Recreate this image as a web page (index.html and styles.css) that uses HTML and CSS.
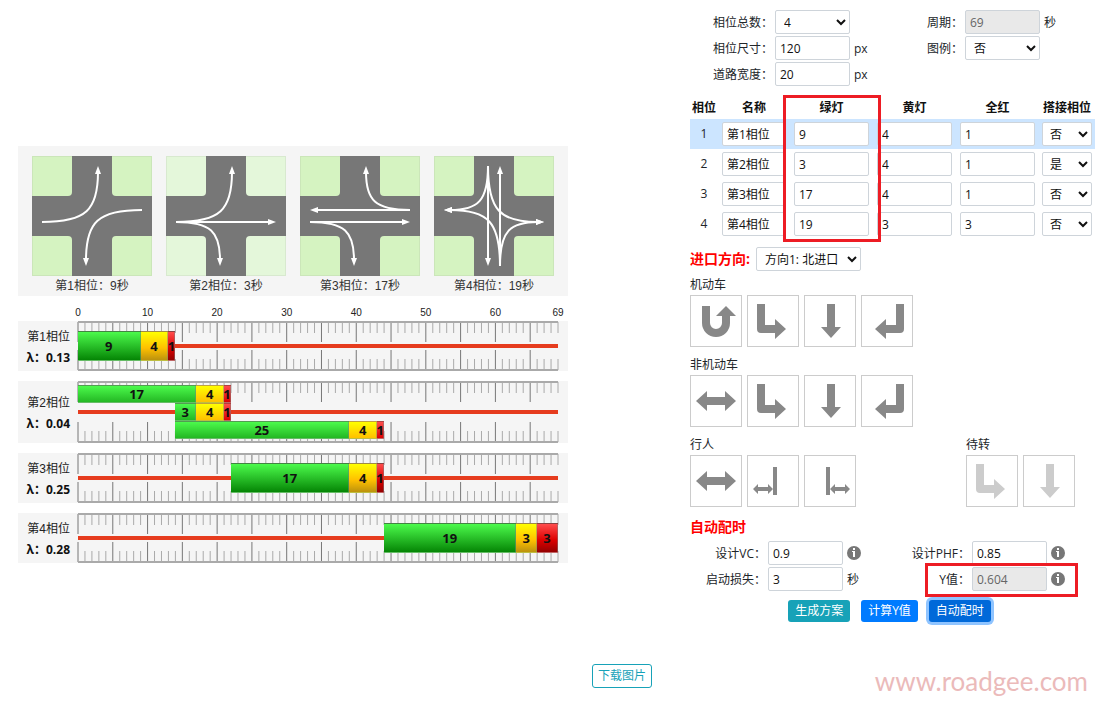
FILE: index.html
```html
<!DOCTYPE html>
<html lang="zh-CN">
<head>
<meta charset="utf-8">
<meta name="viewport" content="width=device-width, initial-scale=1">
<title>信号配时</title>
<link rel="stylesheet" href="styles.css">
</head>
<body>
<svg class="defs" width="0" height="0" aria-hidden="true">
  <defs>
    <symbol id="junction" viewBox="0 0 120 120">
      <rect width="120" height="120" fill="#777"/>
      <g class="corners">
        <path d="M0 0H40V36a4 4 0 0 1-4 4H0z"/>
        <path d="M120 0H80V36a4 4 0 0 0 4 4H120z"/>
        <path d="M0 120H40V84a4 4 0 0 0-4-4H0z"/>
        <path d="M120 120H80V84a4 4 0 0 1 4-4H120z"/>
      </g>
      <rect x=".5" y=".5" width="119" height="119" fill="none" stroke="#777" stroke-opacity=".1"/>
    </symbol>
    <g id="go-left"><path d="M10 66C54 66 66 54 66 16" fill="none" stroke="#fff" stroke-width="2"/><path d="M66 10l-3 8h6z" fill="#fff"/></g>
    <g id="go-through"><path d="M10 66H104" fill="none" stroke="#fff" stroke-width="2"/><path d="M110 66l-8-3v6z" fill="#fff"/></g>
    <g id="go-right"><path d="M10 66C45 66 54 76 54 104" fill="none" stroke="#fff" stroke-width="2"/><path d="M54 110l-3-8h6z" fill="#fff"/></g>
    <symbol id="i-uturn" viewBox="1 1 50 50"><path d="M16 11V28a10 10 0 0 0 20 0V20" fill="none" stroke="currentColor" stroke-width="8"/><path d="M36 11L46 21H26z" fill="currentColor"/></symbol>
    <symbol id="i-left" viewBox="1 1 50 50"><path d="M10 9h8v21h10v-6l11 10-11 10v-6H14a4 4 0 0 1-4-4z" fill="currentColor"/></symbol>
    <symbol id="i-down" viewBox="1 1 50 50"><path d="M23 9h8v23h6L27 43 17 32h6z" fill="currentColor"/></symbol>
    <symbol id="i-right" viewBox="1 1 50 50"><path d="M43 9h-8v21H25v-6L14 34l11 10v-6h14a4 4 0 0 0 4-4z" fill="currentColor"/></symbol>
    <symbol id="i-both" viewBox="1 1 50 50"><path d="M6 26L17 16v6h18v-6l11 10-11 10v-6H17v6z" fill="currentColor"/></symbol>
    <symbol id="i-half-a" viewBox="1 1 50 50"><path d="M26 12h4v28h-4zM6 34l5-5v3h10v-3l5 5-5 5v-3H11v3z" fill="currentColor"/></symbol>
    <symbol id="i-half-b" viewBox="1 1 50 50"><path d="M22 12h4v28h-4zM26 34l5-5v3h10v-3l5 5-5 5v-3H31v3z" fill="currentColor"/></symbol>
    <symbol id="i-info" viewBox="0 0 14 14"><circle cx="7" cy="7" r="7" fill="#777"/><path d="M6 2h2v2H6zM5 5h3v6H6V6H5z" fill="#fff"/></symbol>
  </defs>
</svg>

<main class="workspace">
  <section class="diagram" aria-label="相位图">
    <div class="phases">
      <figure class="phase">
        <svg viewBox="0 0 120 120"><use href="#junction"/><use href="#go-left"/><use href="#go-left" transform="rotate(180 60 60)"/></svg>
        <figcaption>第1相位：9秒</figcaption>
      </figure>
      <figure class="phase phase-overlap">
        <svg viewBox="0 0 120 120"><use href="#junction"/><use href="#go-left"/><use href="#go-through"/><use href="#go-right"/></svg>
        <figcaption>第2相位：3秒</figcaption>
      </figure>
      <figure class="phase">
        <svg viewBox="0 0 120 120"><use href="#junction"/><use href="#go-through"/><use href="#go-right"/><g transform="rotate(180 60 60)"><use href="#go-through"/><use href="#go-right"/></g></svg>
        <figcaption>第3相位：17秒</figcaption>
      </figure>
      <figure class="phase">
        <svg viewBox="0 0 120 120"><use href="#junction"/><g transform="rotate(90 60 60)"><use href="#go-left"/><use href="#go-through"/><use href="#go-right"/></g><g transform="rotate(270 60 60)"><use href="#go-left"/><use href="#go-through"/><use href="#go-right"/></g></svg>
        <figcaption>第4相位：19秒</figcaption>
      </figure>
    </div>

    <div class="axis"><svg id="axis" width="100%" height="25"></svg></div>

    <div class="rows">
      <div class="row">
        <div class="row-label"><span>第1相位</span><b>λ：0.13</b></div>
        <div class="track">
          <svg class="ruler" width="100%" height="50"></svg>
          <div class="lanes">
            <div class="lane tall" style="--start:0"><span class="bar green" style="--s:9">9</span><span class="bar yellow" style="--s:4">4</span><span class="bar red" style="--s:1">1</span></div>
          </div>
        </div>
      </div>
      <div class="row">
        <div class="row-label"><span>第2相位</span><b>λ：0.04</b></div>
        <div class="track">
          <svg class="ruler" width="100%" height="62"></svg>
          <div class="lanes">
            <div class="lane" style="--start:0"><span class="bar green" style="--s:17">17</span><span class="bar yellow" style="--s:4">4</span><span class="bar red" style="--s:1">1</span></div>
            <div class="lane" style="--start:14"><span class="bar green" style="--s:3">3</span><span class="bar yellow" style="--s:4">4</span><span class="bar red" style="--s:1">1</span></div>
            <div class="lane" style="--start:14"><span class="bar green" style="--s:25">25</span><span class="bar yellow" style="--s:4">4</span><span class="bar red" style="--s:1">1</span></div>
          </div>
        </div>
      </div>
      <div class="row">
        <div class="row-label"><span>第3相位</span><b>λ：0.25</b></div>
        <div class="track">
          <svg class="ruler" width="100%" height="50"></svg>
          <div class="lanes">
            <div class="lane tall" style="--start:22"><span class="bar green" style="--s:17">17</span><span class="bar yellow" style="--s:4">4</span><span class="bar red" style="--s:1">1</span></div>
          </div>
        </div>
      </div>
      <div class="row">
        <div class="row-label"><span>第4相位</span><b>λ：0.28</b></div>
        <div class="track">
          <svg class="ruler" width="100%" height="50"></svg>
          <div class="lanes">
            <div class="lane tall" style="--start:44"><span class="bar green" style="--s:19">19</span><span class="bar yellow" style="--s:3">3</span><span class="bar red" style="--s:3">3</span></div>
          </div>
        </div>
      </div>
    </div>
  </section>

  <form class="panel">
    <div class="fields fields-top">
      <div class="field"><label for="count">相位总数：</label><select id="count" class="ctl"><option>4</option></select></div>
      <div class="field"><label for="cycle">周期：</label><input id="cycle" class="ctl" value="69" disabled><span class="unit">秒</span></div>
      <div class="field"><label for="size">相位尺寸：</label><input id="size" class="ctl" value="120"><span class="unit">px</span></div>
      <div class="field"><label for="legend">图例：</label><select id="legend" class="ctl"><option>否</option></select></div>
      <div class="field"><label for="road">道路宽度：</label><input id="road" class="ctl" value="20"><span class="unit">px</span></div>
    </div>

    <div class="table-wrap">
      <table class="plan">
        <colgroup><col class="c-no"><col class="c-name"><col class="c-time"><col class="c-time"><col class="c-time"><col></colgroup>
        <thead><tr><th>相位</th><th>名称</th><th>绿灯</th><th>黄灯</th><th>全红</th><th>搭接相位</th></tr></thead>
        <tbody>
          <tr class="active"><td>1</td><td><input class="ctl name" aria-label="名称1" value="第1相位"></td><td><input class="ctl" aria-label="绿灯1" value="9"></td><td><input class="ctl" aria-label="黄灯1" value="4"></td><td><input class="ctl" aria-label="全红1" value="1"></td><td><select class="ctl small" aria-label="搭接相位1"><option>否</option></select></td></tr>
          <tr><td>2</td><td><input class="ctl name" aria-label="名称2" value="第2相位"></td><td><input class="ctl" aria-label="绿灯2" value="3"></td><td><input class="ctl" aria-label="黄灯2" value="4"></td><td><input class="ctl" aria-label="全红2" value="1"></td><td><select class="ctl small" aria-label="搭接相位2"><option>是</option></select></td></tr>
          <tr><td>3</td><td><input class="ctl name" aria-label="名称3" value="第3相位"></td><td><input class="ctl" aria-label="绿灯3" value="17"></td><td><input class="ctl" aria-label="黄灯3" value="4"></td><td><input class="ctl" aria-label="全红3" value="1"></td><td><select class="ctl small" aria-label="搭接相位3"><option>否</option></select></td></tr>
          <tr><td>4</td><td><input class="ctl name" aria-label="名称4" value="第4相位"></td><td><input class="ctl" aria-label="绿灯4" value="19"></td><td><input class="ctl" aria-label="黄灯4" value="3"></td><td><input class="ctl" aria-label="全红4" value="3"></td><td><select class="ctl small" aria-label="搭接相位4"><option>否</option></select></td></tr>
        </tbody>
      </table>
      <div class="mark mark-green"></div>
    </div>

    <div class="entry"><label class="heading" for="entry">进口方向:</label><select id="entry" class="ctl wide"><option>方向1: 北进口</option></select></div>

    <section class="moves">
      <h3>机动车</h3>
      <div class="tiles">
        <button type="button" class="tile" aria-label="掉头"><svg><use href="#i-uturn"/></svg></button>
        <button type="button" class="tile" aria-label="左转"><svg><use href="#i-left"/></svg></button>
        <button type="button" class="tile" aria-label="直行"><svg><use href="#i-down"/></svg></button>
        <button type="button" class="tile" aria-label="右转"><svg><use href="#i-right"/></svg></button>
      </div>
    </section>
    <section class="moves">
      <h3>非机动车</h3>
      <div class="tiles">
        <button type="button" class="tile" aria-label="过街"><svg><use href="#i-both"/></svg></button>
        <button type="button" class="tile" aria-label="非机动车左转"><svg><use href="#i-left"/></svg></button>
        <button type="button" class="tile" aria-label="非机动车直行"><svg><use href="#i-down"/></svg></button>
        <button type="button" class="tile" aria-label="非机动车右转"><svg><use href="#i-right"/></svg></button>
      </div>
    </section>
    <div class="moves-pair">
      <section class="moves">
        <h3>行人</h3>
        <div class="tiles">
          <button type="button" class="tile" aria-label="行人过街"><svg><use href="#i-both"/></svg></button>
          <button type="button" class="tile" aria-label="行人左半过街"><svg><use href="#i-half-a"/></svg></button>
          <button type="button" class="tile" aria-label="行人右半过街"><svg><use href="#i-half-b"/></svg></button>
        </div>
      </section>
      <section class="moves">
        <h3>待转</h3>
        <div class="tiles">
          <button type="button" class="tile off" aria-label="左转待转"><svg><use href="#i-left"/></svg></button>
          <button type="button" class="tile off" aria-label="直行待行"><svg><use href="#i-down"/></svg></button>
        </div>
      </section>
    </div>

    <h2 class="heading auto-heading">自动配时</h2>
    <div class="fields fields-auto">
      <div class="field"><label for="vc">设计VC：</label><input id="vc" class="ctl" value="0.9"><svg class="info"><use href="#i-info"/></svg></div>
      <div class="field"><label for="phf">设计PHF：</label><input id="phf" class="ctl" value="0.85"><svg class="info"><use href="#i-info"/></svg></div>
      <div class="field"><label for="loss">启动损失：</label><input id="loss" class="ctl" value="3"><span class="unit">秒</span></div>
      <div class="field"><label for="yval">Y值：</label><input id="yval" class="ctl" value="0.604" disabled><svg class="info"><use href="#i-info"/></svg><div class="mark mark-y"></div></div>
    </div>
    <div class="actions">
      <button type="button" class="btn teal">生成方案</button>
      <button type="button" class="btn blue">计算Y值</button>
      <button type="button" class="btn blue pressed">自动配时</button>
    </div>
  </form>
</main>

<footer class="footer">
  <button type="button" class="btn outline">下载图片</button>
  <span class="watermark">www.roadgee.com</span>
</footer>
<script src="ruler.js"></script>
</body>
</html>
```

FILE: styles.css
```css
* { box-sizing: border-box; }

body {
  margin: 0;
  background: #fff;
  color: #212529;
  font: 12px/20px "Open Sans", "Noto Sans CJK SC", sans-serif;
}

.defs { display: block; }

.workspace {
  display: grid;
  grid-template-columns: minmax(0, 1fr) 405px;
  column-gap: 122px;
  padding: 10px 5px 0 18px;
}

/* Phase diagram and timing chart */
.diagram {
  padding-top: 136px;
  font-family: "Liberation Sans", "Noto Sans CJK SC", sans-serif;
}

.phases {
  display: grid;
  grid-template-columns: repeat(4, minmax(0, 1fr));
  gap: 14px;
  padding: 10px 14px 0;
  background: #f5f5f5;
}

.phase { margin: 0; text-align: center; color: #333; fill: #d5f3c1; }
.phase-overlap { fill: #e4f7da; }
.phase svg { display: block; width: 100%; }

.axis { padding: 0 10px 0 60px; }
.axis svg { display: block; overflow: visible; font-size: 10px; fill: #222; }

.rows { display: grid; gap: 10px; }

.row {
  display: grid;
  grid-template-columns: 60px minmax(0, 1fr);
  padding-right: 10px;
  background: #f5f5f5;
}

.row-label {
  display: flex;
  flex-direction: column;
  align-items: flex-end;
  justify-content: center;
  gap: 1px;
  padding: 3px 8px 0 0;
  color: #222;
}

.row-label b { font: bold 12px/20px "Open Sans", "Noto Sans CJK SC", sans-serif; color: #111; }

.track { display: grid; }
.ruler, .lanes { grid-area: 1 / 1; }
.ruler { display: block; overflow: visible; }
.lanes { display: flex; flex-direction: column; justify-content: center; z-index: 1; }

.lane {
  display: flex;
  height: 18px;
  margin-left: calc(var(--start) / 69 * 100%);
  width: 100%;
}
.lane.tall { height: 30px; }

.bar {
  display: flex;
  align-items: center;
  justify-content: center;
  width: calc(var(--s) / 69 * 100%);
  flex: none;
  border: 1px solid rgba(128, 128, 128, .5);
  border-left-width: 0;
  color: #111;
  font: bold 13px/16px "Open Sans", sans-serif;
}
.green { background: linear-gradient(#4cfa4c 0, #007d00 30px); }
.yellow { background: linear-gradient(#ffff00 0, #ffc000 16px, #b08a10 30px); }
.red { background: linear-gradient(#ff4c4c 0, #dd0000 16px, #880000 30px); }

/* Settings panel */
.panel { min-width: 0; }

.fields { display: grid; row-gap: 2px; }
.fields-top { grid-template-columns: 190px 1fr; }
.fields-auto { grid-template-columns: 204px 1fr; }

.field { display: flex; align-items: center; position: relative; }
.field label { width: 85px; padding: 2px 2px 0 0; text-align: right; }
.fields-auto label { width: 78px; }
.unit { margin-left: 4px; padding-top: 2px; }
.info { width: 14px; height: 14px; margin-left: 4px; }

.ctl {
  width: 75px;
  height: 24px;
  padding: 0 4px;
  border: 1px solid #ced4da;
  border-radius: 2px;
  background: #fff;
  color: #111;
  font: 12px/20px "Open Sans", "Noto Sans CJK SC", sans-serif;
}
.ctl:disabled { background: #e9e9e9; color: #666; opacity: 1; }
.ctl.name { width: 64px; }
.ctl.small { width: 50px; padding: 0 3px; }
.ctl.wide { width: 105px; }

.table-wrap { position: relative; margin-top: 9px; }
.plan { width: 100%; border-collapse: collapse; table-layout: fixed; text-align: center; }
.plan th { height: 24px; padding: 2px 0 0; white-space: nowrap; color: #111; }
.plan td { height: 30px; padding: 0; }
.plan td .ctl { vertical-align: middle; }
.c-no { width: 28px; }
.c-name { width: 72px; }
.c-time { width: 83px; }
.active { background: #cce5ff; }

.mark { position: absolute; border: 3px solid #ed1c24; pointer-events: none; }
.mark-green { left: 93px; top: 0; width: 98px; height: 147px; }
.mark-y { left: 31px; top: -4px; width: 153px; height: 34px; }

.heading { margin: 0; color: #f00; font-size: 14px; font-weight: bold; line-height: 20px; }
.entry { display: flex; align-items: center; gap: 6px; margin-top: 8px; }

.moves { margin-top: 8px; }
.moves:first-of-type { margin-top: 4px; }
.moves h3 { margin: 0; font-size: 12px; font-weight: normal; line-height: 20px; }
.tiles { display: flex; gap: 5px; }
.moves-pair { display: grid; grid-template-columns: 276px 1fr; margin-top: 8px; }
.moves-pair .moves { margin-top: 0; }

.tile {
  width: 52px;
  height: 52px;
  padding: 0;
  border: 1px solid #ccc;
  background: #fff;
  color: #888;
}
.tile.off { color: #ccc; }
.tile svg { display: block; width: 50px; height: 50px; }

.auto-heading { margin: 10px 0 4px; }

.actions { display: flex; justify-content: center; gap: 11px; margin-top: 9px; padding-right: 6px; }

.btn {
  height: 22px;
  padding: 0 7px;
  border: 0;
  border-radius: 3px;
  color: #fff;
  font: 12px/20px "Open Sans", "Noto Sans CJK SC", sans-serif;
}
.teal { background: #17a2b8; }
.blue { background: #007bff; }
.pressed { background: #0069d9; box-shadow: 0 0 0 3px #8fc4ff; }
.outline { height: 24px; padding: 0 5px; border: 1px solid #17a2b8; background: #fff; color: #17a2b8; }

.footer {
  display: flex;
  align-items: flex-start;
  justify-content: space-between;
  padding: 42px 12px 0 592px;
}
.watermark { color: #ebbaba; font: 26px/34px Lato, sans-serif; }
```

FILE: ruler.js
```javascript
const CYCLE = 69;
const NS = "http://www.w3.org/2000/svg";

function add(svg, name, attrs, text) {
  const el = document.createElementNS(NS, name);
  for (const key in attrs) el.setAttribute(key, attrs[key]);
  if (text !== undefined) el.textContent = text;
  svg.appendChild(el);
}

const percent = (second) => (second / CYCLE) * 100 + "%";

for (const svg of document.querySelectorAll(".ruler")) {
  const h = Number(svg.getAttribute("height"));
  for (let s = 0; s <= CYCLE; s++) {
    const long = s % 5 === 0;
    const length = long ? 20 : 11;
    const stroke = long ? "#777" : "#aaa";
    const x = percent(s);
    add(svg, "line", { x1: x, x2: x, y1: 1, y2: 1 + length, stroke });
    add(svg, "line", { x1: x, x2: x, y1: h - 1 - length, y2: h - 1, stroke });
  }
  for (const y of [0, h - 2]) {
    add(svg, "rect", { x: 0, y, width: "100%", height: 2, fill: "#aaa" });
  }
  add(svg, "rect", { x: 0, y: h / 2 - 2, width: "100%", height: 4, fill: "#e63c1e" });
}

const axis = document.getElementById("axis");
for (const s of [0, 10, 20, 30, 40, 50, 60, CYCLE]) {
  add(axis, "text", { x: percent(s), y: 20, "text-anchor": "middle" }, s);
}
```
